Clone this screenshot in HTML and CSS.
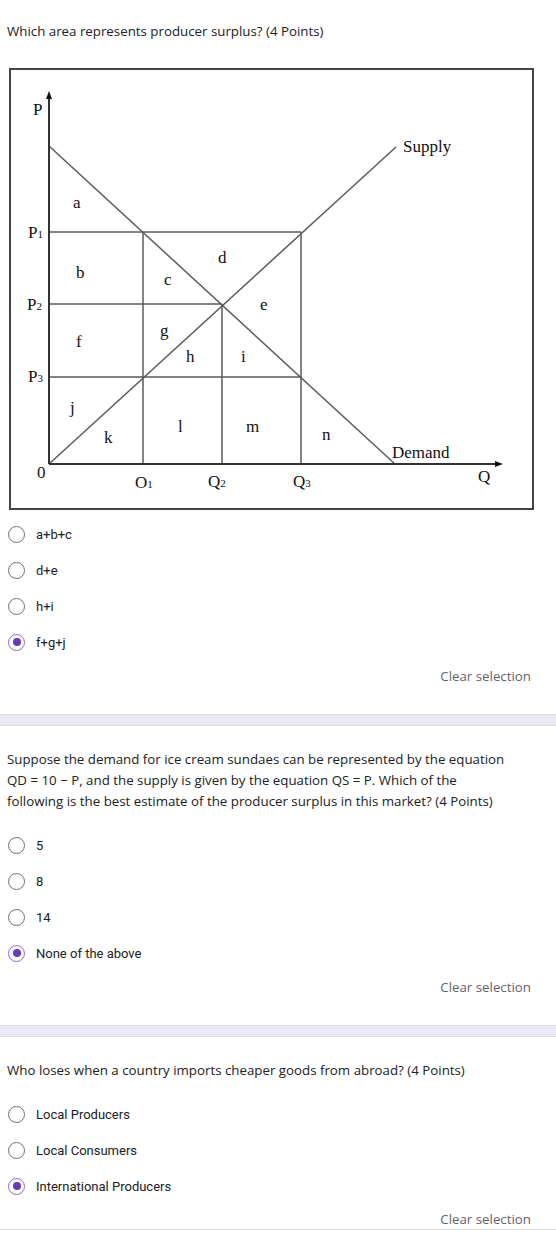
FILE: index.html
```html
<!DOCTYPE html>
<html>
<head>
<meta charset="utf-8">
<link rel="stylesheet" href="styles.css">
</head>
<body>
<div class="page">
  <section class="question first">
    <div class="title">Which area represents producer surplus? (4 Points)</div>
    <div class="figure">
      <svg width="521" height="438" viewBox="11 70 521 438" xmlns="http://www.w3.org/2000/svg">
        <g stroke="#5a5a5a" stroke-width="1.5" fill="none">
          <line x1="49" y1="232" x2="301" y2="232"/>
          <line x1="49" y1="304" x2="222" y2="304"/>
          <line x1="49" y1="377" x2="301" y2="377"/>
          <line x1="143" y1="232" x2="143" y2="464"/>
          <line x1="222" y1="304" x2="222" y2="464"/>
          <line x1="301" y1="232" x2="301" y2="464"/>
          <line x1="49" y1="146" x2="395" y2="464"/>
          <line x1="49" y1="464" x2="396" y2="147"/>
        </g>
        <g stroke="#333" stroke-width="2" fill="none">
          <line x1="49" y1="98" x2="49" y2="464"/>
          <line x1="49" y1="464" x2="496" y2="464"/>
        </g>
        <polygon points="49,91 46,99 52,99" fill="#111"/>
        <polygon points="503,464 495,461 495,467" fill="#111"/>
        <g class="lbl" font-family="'Liberation Serif', serif" font-size="17" fill="#111">
          <text x="33" y="115">P</text>
          <text x="28" y="238">P<tspan font-size="11">1</tspan></text>
          <text x="27" y="310">P<tspan font-size="11">2</tspan></text>
          <text x="28" y="382">P<tspan font-size="11">3</tspan></text>
          <text x="37" y="478">0</text>
          <text x="135" y="488">O<tspan font-size="11">1</tspan></text>
          <text x="208" y="487">Q<tspan font-size="11">2</tspan></text>
          <text x="293" y="487">Q<tspan font-size="11">3</tspan></text>
          <text x="478" y="482">Q</text>
          <text x="403" y="152">Supply</text>
          <text x="392" y="458">Demand</text>
          <text x="73" y="208">a</text>
          <text x="76" y="278">b</text>
          <text x="164" y="285">c</text>
          <text x="218" y="263">d</text>
          <text x="260" y="310">e</text>
          <text x="76" y="347">f</text>
          <text x="160" y="336">g</text>
          <text x="186" y="362">h</text>
          <text x="241" y="362">i</text>
          <text x="70" y="413">j</text>
          <text x="104" y="443">k</text>
          <text x="178" y="432">l</text>
          <text x="246" y="432">m</text>
          <text x="322" y="440">n</text>
        </g>
      </svg>
    </div>
    <div class="options">
      <div class="option"><span class="radio"></span><span class="label">a+b+c</span></div>
      <div class="option"><span class="radio"></span><span class="label">d+e</span></div>
      <div class="option"><span class="radio"></span><span class="label">h+i</span></div>
      <div class="option"><span class="radio checked"></span><span class="label">f+g+j</span></div>
    </div>
    <div class="clear">Clear selection</div>
  </section>
  <div class="separator"></div>
  <section class="question">
    <div class="title">Suppose the demand for ice cream sundaes can be represented by the equation QD = 10 − P, and the supply is given by the equation QS = P. Which of the following is the best estimate of the producer surplus in this market? (4 Points)</div>
    <div class="options">
      <div class="option"><span class="radio"></span><span class="label">5</span></div>
      <div class="option"><span class="radio"></span><span class="label">8</span></div>
      <div class="option"><span class="radio"></span><span class="label">14</span></div>
      <div class="option"><span class="radio checked"></span><span class="label">None of the above</span></div>
    </div>
    <div class="clear">Clear selection</div>
  </section>
  <div class="separator"></div>
  <section class="question last">
    <div class="title">Who loses when a country imports cheaper goods from abroad? (4 Points)</div>
    <div class="options">
      <div class="option"><span class="radio"></span><span class="label">Local Producers</span></div>
      <div class="option"><span class="radio"></span><span class="label">Local Consumers</span></div>
      <div class="option"><span class="radio checked"></span><span class="label">International Producers</span></div>
    </div>
    <div class="clear">Clear selection</div>
  </section>
</div>
</body>
</html>
```

FILE: styles.css
```css
html, body {
  margin: 0;
  padding: 0;
  background: #fff;
}
.page {
  width: 556px;
  color: #202124;
  font-family: "Open Sans", "Liberation Sans", sans-serif;
}
.question {
  display: flex;
  flex-direction: column;
  padding-top: 23px;
}
.question.first {
  padding-top: 21px;
}
.question.last {
  border-bottom: 1px solid #dadce0;
}
.title {
  font-size: 13.3px;
  line-height: 21px;
  padding: 0 42px 0 7px;
}
.figure {
  margin: 26px 0 0 9px;
  width: 521px;
  height: 438px;
  border: 2px solid #444;
}
.figure svg {
  display: block;
}
.options {
  display: flex;
  flex-direction: column;
  margin-top: 15px;
}
.first .options {
  margin-top: 6px;
}
.option {
  display: flex;
  align-items: center;
  height: 36px;
}
.radio {
  box-sizing: border-box;
  width: 17px;
  height: 17px;
  margin-left: 8px;
  border: 1.5px solid #6e6e6e;
  border-radius: 50%;
  display: flex;
  align-items: center;
  justify-content: center;
}
.radio.checked {
  border-color: #8b69cf;
}
.radio.checked::after {
  content: "";
  width: 8px;
  height: 8px;
  border-radius: 50%;
  background: #673ab7;
}
.label {
  margin-left: 11px;
  font-family: Roboto, "Liberation Sans", sans-serif;
  font-size: 13px;
  color: #202124;
}
.clear {
  align-self: flex-end;
  margin: 6px 25px 0 0;
  height: 20px;
  line-height: 20px;
  font-size: 13.3px;
  color: #5f6368;
}
.last .clear {
  margin-top: 5px;
}
.separator {
  margin-top: 28px;
  height: 10px;
  background: #ece9f6;
  border-top: 1px solid #dadce0;
  border-bottom: 1px solid #dadce0;
}
```
